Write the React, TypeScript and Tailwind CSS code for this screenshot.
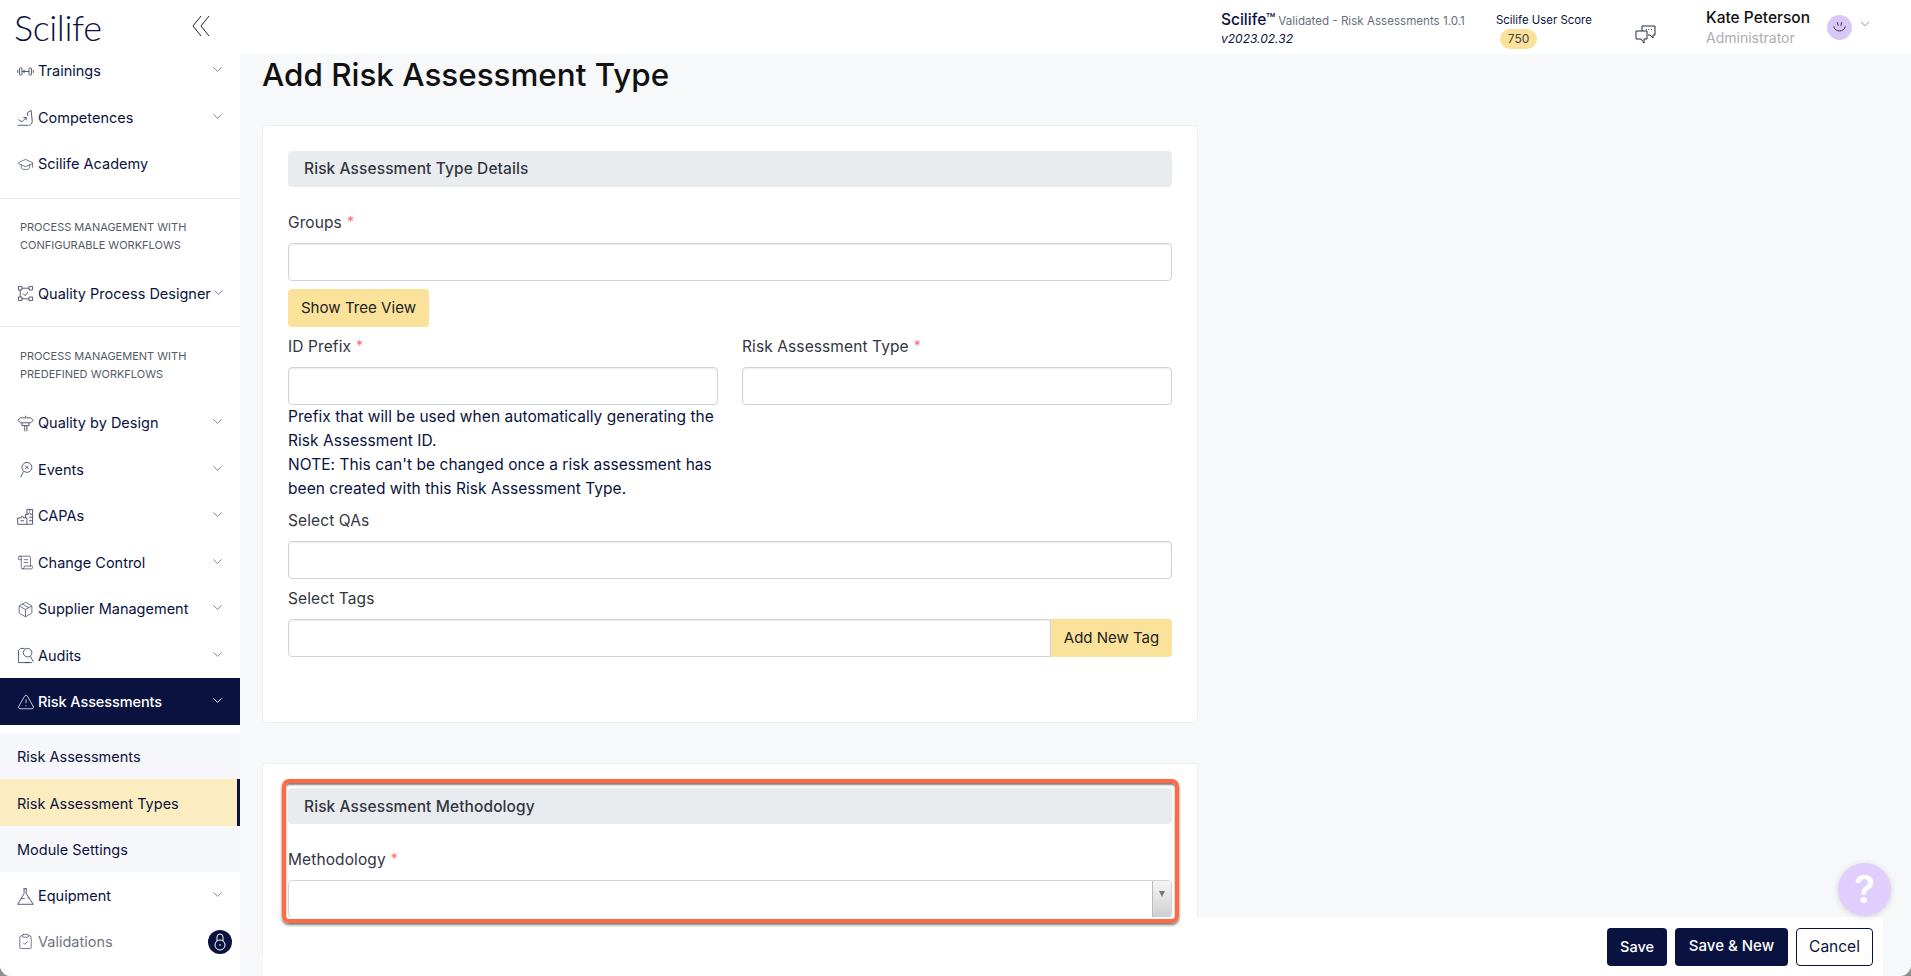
import {
  ChevronDown,
  ClipboardCheck,
  GraduationCap,
  Package,
  ScrollText,
  TriangleAlert,
} from "lucide-react";
import type { ReactNode } from "react";

const iconProps = { size: 17, strokeWidth: 1 };

function Glyph({ children }: { children: ReactNode }) {
  return (
    <svg width="17" height="17" viewBox="0 0 24 24" fill="none" stroke="currentColor" strokeWidth="1.2" strokeLinejoin="round">
      {children}
    </svg>
  );
}

// lucide has nothing close for most of the module icons
function TrainingsIcon() {
  return (
    <Glyph>
      <rect x="3.5" y="7" width="3.5" height="10" rx="1" />
      <rect x="17" y="7" width="3.5" height="10" rx="1" />
      <path d="M1 10v4M23 10v4M7 12h10" />
      <path d="M10 9.5v5" />
    </Glyph>
  );
}

function CompetencesIcon() {
  return (
    <Glyph>
      <path d="M1 23h15M2 15l5 3 6-6M9 12h4v4" />
      <path d="M15 5l5-3 1.5 15c0 3-1.5 6-4.5 6" />
      <path d="M15 5v5" />
    </Glyph>
  );
}

function DesignerIcon() {
  return (
    <Glyph>
      <rect x="2" y="2" width="5" height="5" />
      <rect x="17" y="2" width="5" height="5" />
      <rect x="2" y="17" width="5" height="5" />
      <rect x="17" y="17" width="5" height="5" />
      <path d="M7 4.5h10M7 19.5h10M4.5 7v10M8.5 12l3 3 4-5" />
    </Glyph>
  );
}

function SignIcon() {
  return (
    <Glyph>
      <path d="M5 5h14l4 3.5-4 3.5H5L1 8.500z" transform="translate(0 -1)" />
      <path d="M7 11v4h10v-4M12 3V1M11 15v8M14 15v8" />
    </Glyph>
  );
}

function EventsIcon() {
  return (
    <Glyph>
      <circle cx="14" cy="9" r="7" />
      <path d="M11.5 6.500l5 5M16.500 6.500l-5 5M9 15l-4 8" />
    </Glyph>
  );
}

function CapaIcon() {
  return (
    <Glyph>
      <path d="M1 14h5c-1-3 4-3 3 0h5v9H1z" />
      <path d="M12 14V9h4c-1-3 4-3 3 0h3v14h-8" />
      <path d="M14 2h8v7M14 2v7M18 2v3M5 18h5M17 13h5M17 18h5" />
    </Glyph>
  );
}

function AuditsIcon() {
  return (
    <Glyph>
      <path d="M11 2H5L2 5v17h15" />
      <circle cx="15" cy="8" r="6" />
      <path d="M19 13l4 8M11 22h10" />
    </Glyph>
  );
}

function FlaskIcon() {
  return (
    <Glyph>
      <path d="M9 1h5M10 1v7L1 23h22L13 8V1" />
      <path d="M6 15h5M15 14h2" />
    </Glyph>
  );
}

function PadlockIcon() {
  return (
    <svg width="16" height="18" viewBox="0 0 16 18" fill="none" stroke="currentColor" strokeWidth="1">
      <rect x="3" y="7" width="10" height="10" rx="5" />
      <path d="M5 8V4a3 3 0 0 1 6 0v4M8 11v2" />
    </svg>
  );
}

function NavRow({ icon, label, chevron = true, className = "" }: { icon: ReactNode; label: string; chevron?: boolean; className?: string }) {
  return (
    <div className={`h-[46.5px] pl-[17px] pr-[16px] flex items-center text-[#0a1240] ${className}`}>
      <span className="w-[17px] flex justify-center shrink-0 text-[#3a4160]">{icon}</span>
      <span className="ml-1 text-[14.5px] whitespace-nowrap">{label}</span>
      {chevron && <ChevronDown size={15} strokeWidth={1} className="ml-auto -mt-[3px] shrink-0 -mr-[1px] text-[#33395c]" />}
    </div>
  );
}

function GroupTitle({ first, second }: { first: string; second: string }) {
  return (
    <div className="pl-[20px] text-[11px] leading-[18px] text-[#555a66] whitespace-nowrap">
      <div>{first}</div>
      <div>{second}</div>
    </div>
  );
}

function Sidebar() {
  return (
    <aside className="w-[240px] shrink-0 bg-white flex flex-col overflow-hidden">
      <div className="h-[54px] shrink-0 relative z-10 bg-white flex items-center pl-[14px] pr-[30px] justify-between">
        <span className="text-[36px] font-light leading-none tracking-[-0.4px] text-[#0a1240] font-['Lato',sans-serif]">Scilife</span>
        <svg width="18" height="22" viewBox="0 0 18 22" fill="none" stroke="#222" strokeWidth="1" className="-mt-[2px]">
          <path d="M9 1L1 11l8 10M17 1L9 11l8 10" />
        </svg>
      </div>
      <div className="-mt-[6px]">
        <NavRow icon={<TrainingsIcon />} label="Trainings" />
        <NavRow icon={<CompetencesIcon />} label="Competences" />
        <NavRow icon={<GraduationCap {...iconProps} />} label="Scilife Academy" chevron={false} />
        <div className="mt-[10px] border-t border-[#e8e9ec]" />
        <div className="pt-[19px] pb-[17px]">
          <GroupTitle first="PROCESS MANAGEMENT WITH" second="CONFIGURABLE WORKFLOWS" />
        </div>
        <NavRow icon={<DesignerIcon />} label="Quality Process Designer" />
        <div className="mt-[9px] border-t border-[#e8e9ec]" />
        <div className="pt-[20px] pb-[17px]">
          <GroupTitle first="PROCESS MANAGEMENT WITH" second="PREDEFINED WORKFLOWS" />
        </div>
        <NavRow icon={<SignIcon />} label="Quality by Design" />
        <NavRow icon={<EventsIcon />} label="Events" />
        <NavRow icon={<CapaIcon />} label="CAPAs" />
        <NavRow icon={<ScrollText {...iconProps} />} label="Change Control" />
        <NavRow icon={<Package {...iconProps} />} label="Supplier Management" />
        <NavRow icon={<AuditsIcon />} label="Audits" className="-mb-[1px]" />
        <div className="h-[47px] pl-[17px] pr-[16px] flex items-center bg-[#0a1240] text-white">
          <TriangleAlert size={18} strokeWidth={1} className="shrink-0" />
          <span className="ml-[3px] text-[14.5px] tracking-[-0.1px] font-medium">Risk Assessments</span>
          <ChevronDown size={15} strokeWidth={1.5} className="ml-auto -mt-[3px] -mr-[1px]" />
        </div>
        <div className="mt-[8px] bg-[#f6f7fb] text-[14.5px] text-[#0a1240]">
          <div className="h-[46px] pl-[17px] pt-[2px] flex items-center">Risk Assessments</div>
          <div className="h-[47px] pl-[17px] pt-[2px] flex items-center bg-[#fbedc0] border-r-[3px] border-[#0a1240]">Risk Assessment Types</div>
          <div className="h-[46px] pl-[17px] pt-[2px] flex items-center">Module Settings</div>
        </div>
        <NavRow icon={<FlaskIcon />} label="Equipment" className="pt-[2px]" />
        <div className="h-[46.5px] pl-[17px] pr-[8px] flex items-center text-[#70757f]">
          <ClipboardCheck size={17} strokeWidth={1} className="shrink-0 text-[#3a4160]" />
          <span className="ml-1 text-[14.5px]">Validations</span>
          <span className="ml-auto h-6 w-6 rounded-full bg-[#0a1240] text-white flex items-center justify-center">
            <PadlockIcon />
          </span>
        </div>
      </div>
    </aside>
  );
}

function TopBar() {
  return (
    <header className="h-[54px] shrink-0 bg-white flex items-center pl-[981px]">
      <div className="w-[275px] shrink-0 text-[#0a1240] mt-[1px]">
        <div className="leading-[20px] whitespace-nowrap">
          <span className="text-[15.500px] font-medium">Scilife™</span>
          <span className="text-[11.6px] text-[#6a6f7c] ml-[3px]">Validated - Risk Assessments 1.0.1</span>
        </div>
        <div className="text-[12px] italic leading-[16px]">v2023.02.32</div>
      </div>
      <div className="w-[139px] shrink-0 flex flex-col items-start mt-[6px]">
        <div className="text-[11.4px] text-[#0a1240] leading-[16px] whitespace-nowrap">Scilife User Score</div>
        <div className="ml-[4px] mt-[1px] h-[20px] w-[37px] rounded-full bg-[#fbe29a] text-[12px] text-[#444] flex items-center justify-center">750</div>
      </div>
      <svg width="21" height="20" viewBox="0 0 21 20" fill="none" stroke="#222a44" strokeWidth="1" strokeLinejoin="round" className="shrink-0 mt-[14px]">
        <path d="M7 7V2h13v9h-2v3l-3-3h-2" />
        <path d="M1 7h11v8H9v4l-3-4H1z" />
        <path d="M11 5.500h.8M13.500 5.500h.8M16 5.500h.8" />
      </svg>
      <div className="ml-[50px] w-[121px] shrink-0 mt-[2px]">
        <div className="text-[15.500px] font-medium text-[#111] leading-[20px] whitespace-nowrap">Kate Peterson</div>
        <div className="text-[14px] text-[#a9adb3] leading-[20px]">Administrator</div>
      </div>
      <div className="h-[25px] w-[25px] shrink-0 mt-[1px] rounded-full bg-[#d9c7fa] flex items-center justify-center">
        <svg width="17" height="17" viewBox="0 0 24 24" fill="none" stroke="#333" strokeWidth="1.4" strokeLinecap="round">
          <path d="M4 11c1 8 15 8 16 0M9 5l1 4M15 5l-1 4" />
        </svg>
      </div>
      <ChevronDown size={14} strokeWidth={1} className="ml-[6px] -mt-[6px] text-[#444]" />
    </header>
  );
}

function Label({ text, required }: { text: string; required?: boolean }) {
  return (
    <div className="h-6 mb-[9px] pt-[2px] flex items-center text-[15.5px] tracking-[0.1px] text-[#33363f]">
      {text}
      {required && <span className="ml-[5px] text-[#ff6b70] text-[14px] -mt-[3px]">*</span>}
    </div>
  );
}

function TextInput() {
  return <div className="h-[38px] bg-white border border-[#ced4da] rounded-[4px] shadow-[inset_0_1px_2px_rgba(0,0,0,0.08)]" />;
}

function SectionHeader({ title, className = "" }: { title: string; className?: string }) {
  return (
    <div className={`h-[36px] bg-[#e9ecef] rounded-[4px] pl-[16px] flex items-center text-[15.5px] tracking-[0.1px] font-medium text-[#33363f] ${className}`}>{title}</div>
  );
}

function DetailsCard() {
  return (
    <section className="w-[936px] h-[598px] shrink-0 bg-white border border-[#eceef1] rounded-[4px] p-[25px]">
      <SectionHeader title="Risk Assessment Type Details" />
      <div className="mt-[23px]">
        <Label text="Groups" required />
        <TextInput />
      </div>
      <button className="mt-2 h-[38px] w-[141px] rounded-[4px] bg-[#fbe29a] text-[15.1px] text-[#222]">Show Tree View</button>
      <div className="mt-[7px] grid grid-cols-2 gap-x-6">
        <div>
          <Label text="ID Prefix" required />
          <TextInput />
          <p className="text-[15.5px] tracking-[0.05px] leading-6 text-[#0a1240] whitespace-nowrap">
            Prefix that will be used when automatically generating the
            <br />
            Risk Assessment ID.
            <br />
            NOTE: This can't be changed once a risk assessment has
            <br />
            been created with this Risk Assessment Type.
          </p>
        </div>
        <div>
          <Label text="Risk Assessment Type" required />
          <TextInput />
        </div>
      </div>
      <div className="mt-[7px]">
        <Label text="Select QAs" />
        <TextInput />
      </div>
      <div className="mt-[7px]">
        <Label text="Select Tags" />
        <div className="flex">
          <div className="flex-1 h-[38px] border border-[#ced4da] rounded-l-[4px] shadow-[inset_0_1px_2px_rgba(0,0,0,0.08)]" />
          <button className="w-[121px] h-[38px] rounded-r-[4px] bg-[#fbe29a] text-[15px] text-[#222]">Add New Tag</button>
        </div>
      </div>
    </section>
  );
}

function MethodologyCard() {
  return (
    <section className="relative mt-[40px] w-[936px] h-[193px] shrink-0 bg-white border border-b-0 border-[#eceef1] rounded-t-[4px] p-[24px] pl-[25px] pr-[25px]">
      <SectionHeader title="Risk Assessment Methodology" className="pt-[2px]" />
      <div className="mt-[23px]">
        <Label text="Methodology" required />
        <div className="h-[38px] border border-[#ced4da] rounded-[4px] flex justify-end overflow-hidden">
          <div className="w-[19px] bg-gradient-to-b from-[#f5f5f5] to-[#cfcfcf] border-l border-[#bbb] flex justify-center pt-[10px]">
            <span className="w-0 h-0 border-x-[3.5px] border-x-transparent border-t-[6px] border-t-[#777]" />
          </div>
        </div>
      </div>
      {/* annotation from the screenshot */}
      <div className="absolute z-30 left-[19px] top-[15px] w-[897px] h-[144px] border-4 border-[#ff6a45] rounded-[7px] shadow-[0_2px_3px_rgba(0,0,0,0.55),inset_0_2px_2px_rgba(0,0,0,0.5)] pointer-events-none" />
    </section>
  );
}

export default function App() {
  return (
    <div className="relative h-screen w-screen overflow-hidden bg-[#8e8e8e] font-['Inter',sans-serif]">
      <div className="relative h-full w-full flex overflow-hidden rounded-b-[11px] bg-[#f7f8fa]">
        <Sidebar />
        <div className="flex-1 min-w-0 flex flex-col">
          <TopBar />
          <main className="flex-1 min-h-0 pl-[22px] flex flex-col overflow-hidden">
            <h1 className="h-[71px] shrink-0 pt-[1px] text-[31.4px] leading-[40px] font-medium text-[#111]">Add Risk Assessment Type</h1>
            <DetailsCard />
            <MethodologyCard />
          </main>
        </div>
        <footer className="absolute z-20 bottom-0 left-[263px] right-[28px] h-[59px] bg-white flex items-center justify-end gap-2 pr-[10px]">
          <button className="h-[38px] w-[60px] rounded-[4px] bg-[#0a1240] text-white text-[14.5px] font-medium">Save</button>
          <button className="h-[38px] w-[113px] rounded-[4px] bg-[#0a1240] text-white text-[15px] font-medium">Save &amp; New</button>
          <button className="h-[38px] w-[77px] rounded-[4px] bg-white border border-[#0a1240] text-[#0a1240] text-[15.5px]">Cancel</button>
        </footer>
        <div className="absolute z-20 left-[1838px] top-[863px] h-[53px] w-[53px] rounded-full bg-[#e0cffc] shadow-[0_1px_6px_rgba(0,0,0,0.15)] flex items-center justify-center text-white text-[38px] font-semibold">?</div>
      </div>
    </div>
  );
}
